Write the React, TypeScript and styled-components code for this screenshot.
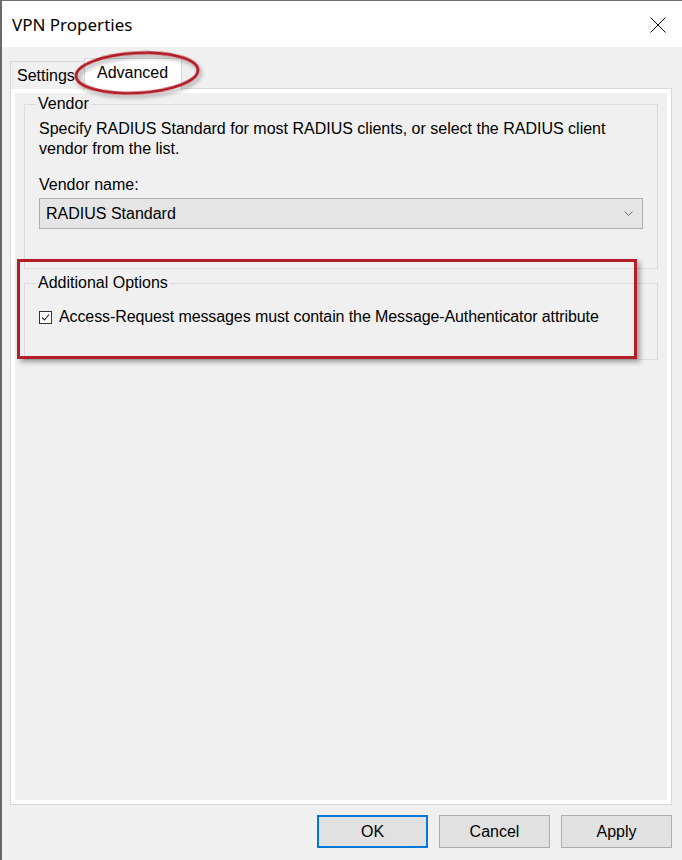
import styled, { createGlobalStyle } from "styled-components";

const GlobalStyle = createGlobalStyle`
  html, body {
    margin: 0;
    padding: 0;
    background: #f0f0f0;
  }
  body {
    font-family: "Liberation Sans", Arial, sans-serif;
    color: #000;
  }
`;

const Window = styled.div`
  width: 682px;
  height: 860px;
  box-sizing: border-box;
  display: flex;
  flex-direction: column;
  background: #f0f0f0;
  border-top: 1px solid #6f6f6f;
  border-left: 2px solid #6a6a6a;
  overflow: hidden;
`;

const TitleBar = styled.div`
  height: 46px;
  flex: none;
  background: #ffffff;
  display: flex;
  align-items: center;
  justify-content: space-between;
  padding: 0 16px 0 10px;
`;

const Title = styled.span`
  font-family: "Noto Sans", "Open Sans", sans-serif;
  font-size: 17px;
  color: #000;
`;

const CloseButton = styled.div`
  width: 16px;
  height: 16px;
  display: flex;
  margin-top: 1px;
`;

const Content = styled.div`
  flex: 1;
  display: flex;
  flex-direction: column;
  padding: 11px 10px 0 8px;
  min-height: 0;
`;

const TabRow = styled.div`
  position: relative;
  display: flex;
  align-items: flex-end;
  height: 31px;
  flex: none;
`;

const Tab = styled.div<{ $active?: boolean }>`
  box-sizing: border-box;
  height: ${(p) => (p.$active ? "32px" : "28px")};
  width: ${(p) => (p.$active ? "98px" : "80px")};
  margin-left: ${(p) => (p.$active ? "-6px" : "0")};
  margin-bottom: ${(p) => (p.$active ? "-1px" : "0")};
  padding: ${(p) => (p.$active ? "5px 0 0 12px" : "5px 0 0 6px")};
  background: ${(p) => (p.$active ? "#ffffff" : "#f0f0f0")};
  border: 1px solid #d9d9d9;
  border-bottom: none;
  font-size: 16px;
  z-index: ${(p) => (p.$active ? 2 : 1)};
  white-space: nowrap;
  overflow: hidden;
`;

const Ellipse = styled.svg`
  position: absolute;
  left: 62px;
  top: -10px;
  width: 130px;
  height: 50px;
  z-index: 5;
  overflow: visible;
`;

const Panel = styled.div`
  flex: 1;
  margin-top: -1px;
  border: 1px solid #d9d9d9;
  background: #ffffff;
  padding: 4px;
  display: flex;
`;

const PanelInner = styled.div`
  position: relative;
  flex: 1;
  background: #f0f0f0;
  padding: 2px 9px 0 9px;
  display: flex;
  flex-direction: column;
  gap: 5px;
`;

const GroupBox = styled.fieldset<{ $bottom: number }>`
  margin: 0;
  border: 1px solid #dcdcdc;
  padding: 0 14px ${(p) => p.$bottom}px 14px;
  min-width: 0;
`;

const Legend = styled.legend`
  font-size: 16px;
  line-height: 18px;
  padding: 0 2px;
  margin-left: -3px;
`;

const Description = styled.p`
  margin: 6px 0 0 0;
  font-size: 16px;
  line-height: 20px;
`;

const FieldLabel = styled.div`
  margin-top: 16px;
  font-size: 16px;
  line-height: 20px;
`;

const Combo = styled.div`
  margin-top: 3px;
  height: 31px;
  box-sizing: border-box;
  background: #e5e5e5;
  border: 1px solid #adadad;
  display: flex;
  align-items: center;
  justify-content: space-between;
  padding: 0 9px 0 6px;
  font-size: 16px;
`;

const CheckRow = styled.label`
  margin-top: 15px;
  display: flex;
  align-items: center;
  gap: 7px;
  font-size: 16px;
  line-height: 20px;
  letter-spacing: -0.1px;
`;

const CheckBox = styled.span`
  width: 13px;
  height: 13px;
  box-sizing: border-box;
  border: 1px solid #333333;
  background: #ffffff;
  display: flex;
  align-items: center;
  justify-content: center;
  flex: none;
`;

const Highlight = styled.div`
  position: absolute;
  left: 2px;
  top: 166px;
  width: 620px;
  height: 100px;
  box-sizing: border-box;
  border: 3px solid #b21f26;
  box-shadow: 3px 3px 5px rgba(0, 0, 0, 0.35);
  pointer-events: none;
`;

const ButtonRow = styled.div`
  flex: none;
  display: flex;
  justify-content: flex-end;
  gap: 11px;
  padding: 10px 0 12px 0;
`;

const Button = styled.button<{ $default?: boolean }>`
  width: 111px;
  height: 33px;
  box-sizing: border-box;
  background: #e1e1e1;
  border: ${(p) => (p.$default ? "2px solid #0078d7" : "1px solid #adadad")};
  font-family: "Liberation Sans", Arial, sans-serif;
  font-size: 16px;
  color: #000;
  padding: 0;
`;

export default function App() {
  return (
    <>
      <GlobalStyle />
      <Window>
        <TitleBar>
          <Title>VPN Properties</Title>
          <CloseButton>
            <svg width="16" height="16" viewBox="0 0 16 16">
              <path d="M0.5 0.5 L15.5 15.5 M15.5 0.5 L0.5 15.5" stroke="#000" strokeWidth="1" />
            </svg>
          </CloseButton>
        </TitleBar>
        <Content>
          <TabRow>
            <Tab>Settings</Tab>
            <Tab $active>Advanced</Tab>
            <Ellipse viewBox="0 0 130 50">
              <defs>
                <filter id="shade" x="-10%" y="-20%" width="130%" height="160%">
                  <feDropShadow dx="2" dy="3" stdDeviation="2" floodColor="#000" floodOpacity="0.35" />
                </filter>
              </defs>
              <ellipse
                cx="65"
                cy="25"
                rx="61"
                ry="20"
                fill="none"
                stroke="#b21f26"
                strokeWidth="3"
                transform="rotate(-3 65 25)"
                filter="url(#shade)"
              />
            </Ellipse>
          </TabRow>
          <Panel>
            <PanelInner>
              <GroupBox $bottom={39}>
                <Legend>Vendor</Legend>
                <Description>
                  Specify RADIUS Standard for most RADIUS clients, or select the RADIUS client
                  vendor from the list.
                </Description>
                <FieldLabel>Vendor name:</FieldLabel>
                <Combo>
                  <span>RADIUS Standard</span>
                  <svg width="9" height="6" viewBox="0 0 9 6">
                    <path d="M0.5 0.5 L4.5 4.5 L8.5 0.5" fill="none" stroke="#707070" strokeWidth="1" />
                  </svg>
                </Combo>
              </GroupBox>
              <GroupBox $bottom={32}>
                <Legend>Additional Options</Legend>
                <CheckRow>
                  <CheckBox>
                    <svg width="11" height="11" viewBox="0 0 11 11">
                      <path d="M2 5.5 L4.5 8 L9 2.5" fill="none" stroke="#222" strokeWidth="1.1" />
                    </svg>
                  </CheckBox>
                  Access-Request messages must contain the Message-Authenticator attribute
                </CheckRow>
              </GroupBox>
              <Highlight />
            </PanelInner>
          </Panel>
          <ButtonRow>
            <Button $default>OK</Button>
            <Button>Cancel</Button>
            <Button>Apply</Button>
          </ButtonRow>
        </Content>
      </Window>
    </>
  );
}
